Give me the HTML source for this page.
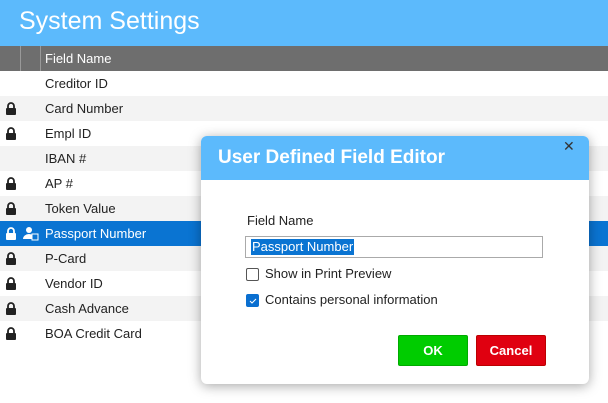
<!DOCTYPE html>
<html><head><style>
body{margin:0;width:608px;height:403px;overflow:hidden;font-family:"Liberation Sans",sans-serif;background:#fff;position:relative}
.hdr{position:absolute;left:0;top:0;width:608px;height:46px;background:#5cbafc;color:#fff;font-size:25px;line-height:42px;padding-left:19px;box-sizing:border-box}
.ch{position:absolute;left:0;top:46px;width:608px;height:25px;background:#6e6e6e;color:#fff;font-size:13px;line-height:25px}
.ch span{position:absolute;left:45px}
.div{position:absolute;top:46px;width:1px;height:25px;background:#999}
.row{position:absolute;left:0;width:608px;height:25px;font-size:13px;line-height:25px;color:#222}
.row span{position:absolute;left:45px}
.g{background:#f3f3f3}
.sel{background:#0a74d2;color:#fff}
.lock{position:absolute;left:5px;top:6px}
.dlg{position:absolute;left:201px;top:136px;width:388px;height:248px;background:#fff;border-radius:6px;box-shadow:0 2px 12px rgba(0,0,0,.35);overflow:hidden}
.dt{height:44px;background:#5cbafc;color:#fff;font-weight:bold;font-size:19px;line-height:44px;padding-left:17px}
.x{position:absolute;left:362px;top:2px;color:#333;font-size:14px}
.lbl{position:absolute;left:46px;top:77px;font-size:13px;color:#222}
.inp{position:absolute;left:44px;top:100px;width:298px;height:22px;border:1px solid #aaa;box-sizing:border-box}
.inp span{position:absolute;left:5px;top:2px;background:#0a74d2;color:#fff;font-size:13px;line-height:16px;padding:0 1px}
.cb{position:absolute;left:45px;width:11px;height:11px;border:1px solid #555;border-radius:2px}
.ct{position:absolute;left:64px;font-size:13px;color:#222}
.btn{position:absolute;top:199px;width:68px;height:29px;color:#fff;font-weight:bold;font-size:13px;line-height:29px;text-align:center;border-radius:2px}
</style></head><body>
<div class="hdr">System Settings</div>
<div class="ch"><span>Field Name</span></div>
<div class="div" style="left:20px"></div><div class="div" style="left:40px"></div>
<svg width="0" height="0" style="position:absolute"><defs><symbol id="lk" viewBox="0 0 12 13"><path d="M3 6V4a3 3 0 0 1 6 0v2" stroke="currentColor" stroke-width="1.8" fill="none"/><rect x="1" y="6" width="10" height="7" rx="1" fill="currentColor"/></symbol></defs></svg>
<div class="row" style="top:71px"><span>Creditor ID</span></div>
<div class="row g" style="top:96px"><svg class="lock" width="12" height="13"><use href="#lk"/></svg><span>Card Number</span></div>
<div class="row" style="top:121px"><svg class="lock" width="12" height="13"><use href="#lk"/></svg><span>Empl ID</span></div>
<div class="row g" style="top:146px"><span>IBAN #</span></div>
<div class="row" style="top:171px"><svg class="lock" width="12" height="13"><use href="#lk"/></svg><span>AP #</span></div>
<div class="row g" style="top:196px"><svg class="lock" width="12" height="13"><use href="#lk"/></svg><span>Token Value</span></div>
<div class="row sel" style="top:221px"><svg class="lock" width="12" height="13" style="color:#fff"><use href="#lk"/></svg>
<svg style="position:absolute;left:23px;top:5px" width="16" height="15"><circle cx="6" cy="4" r="3" fill="#fff"/><path d="M0 13a6 5 0 0 1 12 0z" fill="#fff"/><rect x="9" y="8" width="6" height="6" fill="#0a74d2" stroke="#fff"/></svg><span>Passport Number</span></div>
<div class="row g" style="top:246px"><svg class="lock" width="12" height="13"><use href="#lk"/></svg><span>P-Card</span></div>
<div class="row" style="top:271px"><svg class="lock" width="12" height="13"><use href="#lk"/></svg><span>Vendor ID</span></div>
<div class="row g" style="top:296px"><svg class="lock" width="12" height="13"><use href="#lk"/></svg><span>Cash Advance</span></div>
<div class="row" style="top:321px"><svg class="lock" width="12" height="13"><use href="#lk"/></svg><span>BOA Credit Card</span></div>
<div class="dlg">
<div class="dt">User Defined Field Editor</div>
<div class="x">✕</div>
<div class="lbl">Field Name</div>
<div class="inp"><span>Passport Number</span></div>
<div class="cb" style="top:132px"></div><div class="ct" style="top:130px">Show in Print Preview</div>
<div class="cb" style="top:158px;background:#0a6fd0;border-color:#0a6fd0"><svg width="11" height="11" style="position:absolute;left:0;top:0"><path d="M3 6l2 2 4-4" stroke="#fff" stroke-width="1" fill="none"/></svg></div><div class="ct" style="top:156px">Contains personal information</div>
<div class="btn" style="left:197px;background:#0c0;border:1px solid #0a0">OK</div>
<div class="btn" style="left:275px;background:#e00010;border:1px solid #b00">Cancel</div>
</div>
</body></html>
